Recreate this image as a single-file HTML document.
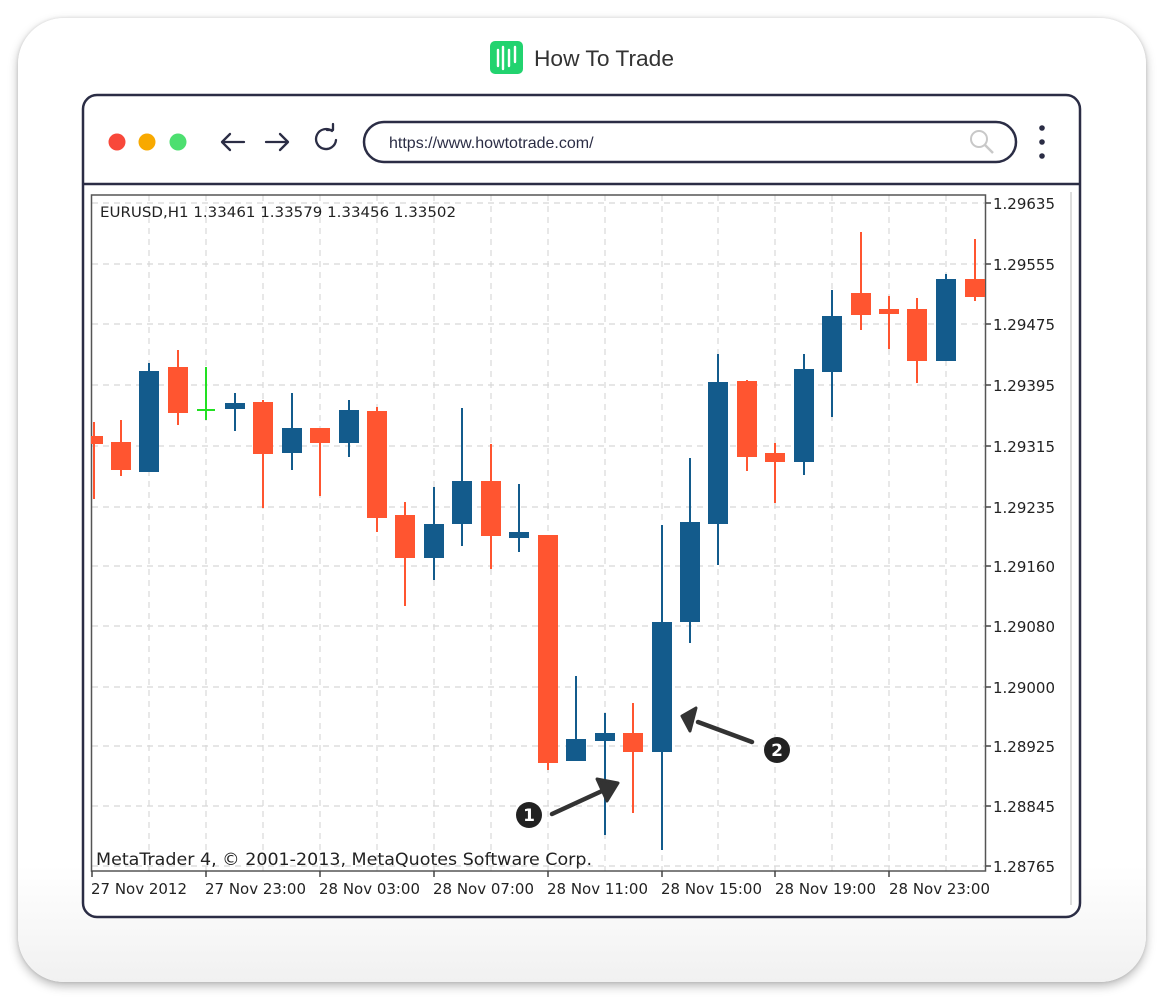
<!DOCTYPE html>
<html><head><meta charset="utf-8">
<style>
html,body{margin:0;padding:0;background:#fff;}
body{width:1170px;height:1006px;position:relative;overflow:hidden;font-family:"DejaVu Sans","Liberation Sans",sans-serif;}
.card{position:absolute;left:18px;top:18px;width:1128px;height:964px;border-radius:46px;background:linear-gradient(#fff 0,#fff 88%,#f1f1f1 100%);box-shadow:0 4px 10px rgba(0,0,0,.28),0 0 3px rgba(0,0,0,.12);}
</style></head><body>
<div class="card"></div>
<svg width="1170" height="1006" style="position:absolute;left:0;top:0" xmlns="http://www.w3.org/2000/svg">
<rect x="490" y="41" width="33" height="33" rx="5" fill="#22d36f"/>
<g stroke="#fff" stroke-width="2.4" stroke-linecap="round">
<line x1="498" y1="50" x2="498" y2="66"/><line x1="503" y1="47" x2="503" y2="69"/>
<line x1="509" y1="50" x2="509" y2="66"/><line x1="515" y1="47" x2="515" y2="62"/></g>
<text x="534" y="66" font-family="Liberation Sans,sans-serif" font-size="22" font-weight="500" fill="#333" textLength="140" lengthAdjust="spacingAndGlyphs">How To Trade</text>
<rect x="83" y="95" width="997" height="822" rx="14" fill="#fff" stroke="#2b2d45" stroke-width="2.5"/>
<line x1="83" y1="184" x2="1080" y2="184" stroke="#2b2d45" stroke-width="2.5"/>
<circle cx="117" cy="142" r="8.5" fill="#f8483a"/><circle cx="147" cy="142" r="8.5" fill="#f8a900"/><circle cx="178" cy="142" r="8.5" fill="#4ddf70"/>
<g stroke="#2b2d45" stroke-width="2.3" fill="none" stroke-linecap="round" stroke-linejoin="round">
<path d="M244 142H222M230 134l-8 8 8 8"/><path d="M266 142H288M280 134l8 8-8 8"/>
<path d="M336 140a10 10 0 1 1-4-9"/><path d="M327 130h6v-6"/>
</g>
<rect x="364" y="122" width="652" height="40" rx="20" fill="#fff" stroke="#2b2d45" stroke-width="2.5"/>
<text x="389" y="148" font-size="16" fill="#2b2d45" font-family="Liberation Sans,sans-serif">https://www.howtotrade.com/</text>
<circle cx="979" cy="139" r="8" fill="none" stroke="#c8c8c8" stroke-width="2"/><line x1="985" y1="145" x2="993" y2="153" stroke="#c8c8c8" stroke-width="2.5"/>
<circle cx="1042" cy="128" r="2.8" fill="#2b2d45"/><circle cx="1042" cy="142" r="2.8" fill="#2b2d45"/><circle cx="1042" cy="156" r="2.8" fill="#2b2d45"/>
<line x1="1071" y1="192" x2="1071" y2="905" stroke="#ddd" stroke-width="2"/>
<g stroke="#d8d8d8" stroke-width="1.2" stroke-dasharray="6,5">
<line x1="149" y1="195" x2="149" y2="871"/><line x1="206" y1="195" x2="206" y2="871"/><line x1="263" y1="195" x2="263" y2="871"/><line x1="320" y1="195" x2="320" y2="871"/><line x1="377" y1="195" x2="377" y2="871"/><line x1="434" y1="195" x2="434" y2="871"/><line x1="491" y1="195" x2="491" y2="871"/><line x1="548" y1="195" x2="548" y2="871"/><line x1="605" y1="195" x2="605" y2="871"/><line x1="662" y1="195" x2="662" y2="871"/><line x1="718" y1="195" x2="718" y2="871"/><line x1="775" y1="195" x2="775" y2="871"/><line x1="832" y1="195" x2="832" y2="871"/><line x1="889" y1="195" x2="889" y2="871"/><line x1="946" y1="195" x2="946" y2="871"/>
<line x1="92" y1="203" x2="985" y2="203"/><line x1="92" y1="264" x2="985" y2="264"/><line x1="92" y1="324" x2="985" y2="324"/><line x1="92" y1="385" x2="985" y2="385"/><line x1="92" y1="446" x2="985" y2="446"/><line x1="92" y1="507" x2="985" y2="507"/><line x1="92" y1="566" x2="985" y2="566"/><line x1="92" y1="626" x2="985" y2="626"/><line x1="92" y1="687" x2="985" y2="687"/><line x1="92" y1="746" x2="985" y2="746"/><line x1="92" y1="806" x2="985" y2="806"/><line x1="92" y1="866" x2="985" y2="866"/>
</g>
<rect x="91.5" y="195" width="894" height="676" fill="none" stroke="#555" stroke-width="1.5"/>
<g stroke-width="2">
<g fill="#ff5530" stroke="#ff5530">
<line x1="94" y1="422" x2="94" y2="499"/><rect x="92" y="437" width="10" height="6"/>
<line x1="121" y1="420" x2="121" y2="476"/><rect x="112" y="443" width="18" height="26"/>
<line x1="178" y1="350" x2="178" y2="425"/><rect x="169" y="368" width="18" height="44"/>
<line x1="263" y1="400" x2="263" y2="508"/><rect x="254" y="403" width="18" height="50"/>
<line x1="320" y1="429" x2="320" y2="496"/><rect x="311" y="429" width="18" height="13"/>
<line x1="377" y1="407" x2="377" y2="532"/><rect x="368" y="412" width="18" height="105"/>
<line x1="405" y1="502" x2="405" y2="606"/><rect x="396" y="516" width="18" height="41"/>
<line x1="491" y1="444" x2="491" y2="569"/><rect x="482" y="482" width="18" height="53"/>
<line x1="548" y1="535" x2="548" y2="770"/><rect x="539" y="536" width="18" height="226"/>
<line x1="633" y1="703" x2="633" y2="813"/><rect x="624" y="734" width="18" height="17"/>
<line x1="747" y1="380" x2="747" y2="471"/><rect x="738" y="382" width="18" height="74"/>
<line x1="775" y1="443" x2="775" y2="503"/><rect x="766" y="454" width="18" height="7"/>
<line x1="861" y1="232" x2="861" y2="330"/><rect x="852" y="294" width="18" height="20"/>
<line x1="889" y1="296" x2="889" y2="349"/><rect x="880" y="310" width="18" height="3"/>
<line x1="917" y1="298" x2="917" y2="383"/><rect x="908" y="310" width="18" height="50"/>
<line x1="975" y1="239" x2="975" y2="301"/><rect x="966" y="280" width="18" height="16"/>
</g>
<g fill="#135b8c" stroke="#135b8c">
<line x1="149" y1="363" x2="149" y2="471"/><rect x="140" y="372" width="18" height="99"/>
<line x1="235" y1="393" x2="235" y2="431"/><rect x="226" y="404" width="18" height="4"/>
<line x1="292" y1="393" x2="292" y2="470"/><rect x="283" y="429" width="18" height="23"/>
<line x1="349" y1="400" x2="349" y2="457"/><rect x="340" y="411" width="18" height="31"/>
<line x1="434" y1="487" x2="434" y2="580"/><rect x="425" y="525" width="18" height="32"/>
<line x1="462" y1="408" x2="462" y2="546"/><rect x="453" y="482" width="18" height="41"/>
<line x1="519" y1="484" x2="519" y2="552"/><rect x="510" y="533" width="18" height="4"/>
<line x1="576" y1="676" x2="576" y2="760"/><rect x="567" y="740" width="18" height="20"/>
<line x1="605" y1="713" x2="605" y2="835"/><rect x="596" y="734" width="18" height="6"/>
<line x1="662" y1="525" x2="662" y2="850"/><rect x="653" y="623" width="18" height="128"/>
<line x1="690" y1="458" x2="690" y2="643"/><rect x="681" y="523" width="18" height="98"/>
<line x1="718" y1="354" x2="718" y2="565"/><rect x="709" y="383" width="18" height="140"/>
<line x1="804" y1="354" x2="804" y2="475"/><rect x="795" y="370" width="18" height="91"/>
<line x1="832" y1="290" x2="832" y2="417"/><rect x="823" y="317" width="18" height="54"/>
<line x1="946" y1="274" x2="946" y2="360"/><rect x="937" y="280" width="18" height="80"/>
</g>
<line x1="206" y1="367" x2="206" y2="420" stroke="#22e022"/><line x1="197" y1="410" x2="215" y2="410" stroke="#22e022"/>
</g>
<g stroke="#333" stroke-width="4.5" fill="none" stroke-linecap="round">
<path d="M552 814L602 791"/><path d="M752 742L698 722"/>
</g>
<path d="M618 783L597 779L607 801Z" fill="#333" stroke="#333" stroke-width="3" stroke-linejoin="round"/>
<path d="M682 716L696 708L690 731Z" fill="#333" stroke="#333" stroke-width="3" stroke-linejoin="round"/>
<circle cx="529" cy="815" r="13" fill="#222"/><text x="529" y="821" font-size="17" font-weight="bold" fill="#fff" text-anchor="middle">1</text>
<circle cx="777" cy="750" r="13" fill="#222"/><text x="777" y="756" font-size="17" font-weight="bold" fill="#fff" text-anchor="middle">2</text>
<g font-family="DejaVu Sans,sans-serif" fill="#222">
<text x="100" y="217" font-size="14" textLength="356" lengthAdjust="spacingAndGlyphs">EURUSD,H1  1.33461 1.33579 1.33456 1.33502</text>
<text x="96" y="865" font-size="17" textLength="496" lengthAdjust="spacingAndGlyphs">MetaTrader 4, © 2001-2013, MetaQuotes Software Corp.</text>
<g font-size="15">
<text x="993" y="209" textLength="62" lengthAdjust="spacingAndGlyphs">1.29635</text>
<text x="993" y="270" textLength="62" lengthAdjust="spacingAndGlyphs">1.29555</text>
<text x="993" y="330" textLength="62" lengthAdjust="spacingAndGlyphs">1.29475</text>
<text x="993" y="391" textLength="62" lengthAdjust="spacingAndGlyphs">1.29395</text>
<text x="993" y="452" textLength="62" lengthAdjust="spacingAndGlyphs">1.29315</text>
<text x="993" y="513" textLength="62" lengthAdjust="spacingAndGlyphs">1.29235</text>
<text x="993" y="572" textLength="62" lengthAdjust="spacingAndGlyphs">1.29160</text>
<text x="993" y="632" textLength="62" lengthAdjust="spacingAndGlyphs">1.29080</text>
<text x="993" y="693" textLength="62" lengthAdjust="spacingAndGlyphs">1.29000</text>
<text x="993" y="752" textLength="62" lengthAdjust="spacingAndGlyphs">1.28925</text>
<text x="993" y="812" textLength="62" lengthAdjust="spacingAndGlyphs">1.28845</text>
<text x="993" y="872" textLength="62" lengthAdjust="spacingAndGlyphs">1.28765</text>
<text x="91" y="894" textLength="96" lengthAdjust="spacingAndGlyphs">27 Nov 2012</text>
<text x="205" y="894" textLength="101" lengthAdjust="spacingAndGlyphs">27 Nov 23:00</text>
<text x="319" y="894" textLength="101" lengthAdjust="spacingAndGlyphs">28 Nov 03:00</text>
<text x="433" y="894" textLength="101" lengthAdjust="spacingAndGlyphs">28 Nov 07:00</text>
<text x="547" y="894" textLength="101" lengthAdjust="spacingAndGlyphs">28 Nov 11:00</text>
<text x="661" y="894" textLength="101" lengthAdjust="spacingAndGlyphs">28 Nov 15:00</text>
<text x="775" y="894" textLength="101" lengthAdjust="spacingAndGlyphs">28 Nov 19:00</text>
<text x="889" y="894" textLength="101" lengthAdjust="spacingAndGlyphs">28 Nov 23:00</text>
</g></g>
<g stroke="#444" stroke-width="1.5">
<line x1="92" y1="871" x2="92" y2="877"/><line x1="206" y1="871" x2="206" y2="877"/><line x1="320" y1="871" x2="320" y2="877"/><line x1="434" y1="871" x2="434" y2="877"/><line x1="548" y1="871" x2="548" y2="877"/><line x1="662" y1="871" x2="662" y2="877"/><line x1="775" y1="871" x2="775" y2="877"/><line x1="889" y1="871" x2="889" y2="877"/>
<line x1="986" y1="203" x2="991" y2="203"/><line x1="986" y1="264" x2="991" y2="264"/><line x1="986" y1="324" x2="991" y2="324"/><line x1="986" y1="385" x2="991" y2="385"/><line x1="986" y1="446" x2="991" y2="446"/><line x1="986" y1="507" x2="991" y2="507"/><line x1="986" y1="566" x2="991" y2="566"/><line x1="986" y1="626" x2="991" y2="626"/><line x1="986" y1="687" x2="991" y2="687"/><line x1="986" y1="746" x2="991" y2="746"/><line x1="986" y1="806" x2="991" y2="806"/><line x1="986" y1="866" x2="991" y2="866"/>
</g>
</svg>
</body></html>
